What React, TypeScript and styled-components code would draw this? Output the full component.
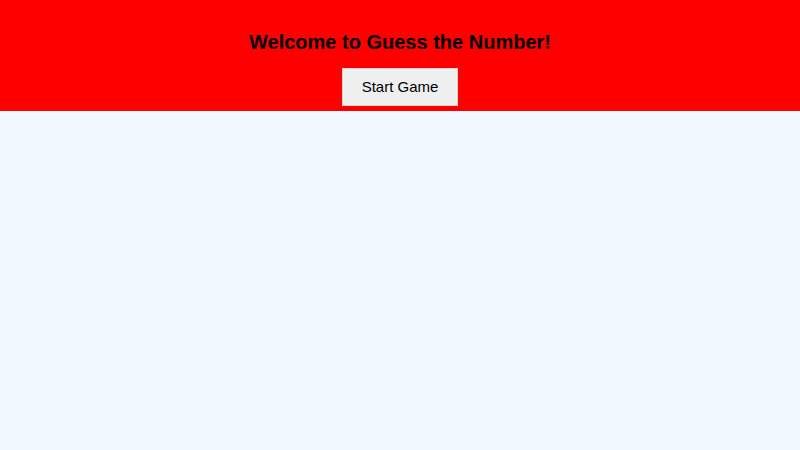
import styled, { createGlobalStyle } from 'styled-components';

const GlobalStyle = createGlobalStyle`
  html, body {
    margin: 0;
    padding: 0;
    height: 100%;
  }
  body {
    background-color: #f0f8ff;
    font-family: "Liberation Sans", Arial, sans-serif;
  }
`;

const App = () => {
  return (
    <>
      <GlobalStyle />
      <Header>
        <Title>Welcome to Guess the Number!</Title>
        <StartButton type="button">Start Game</StartButton>
      </Header>
    </>
  );
};

const Header = styled.header`
  display: flex;
  flex-direction: column;
  align-items: center;
  padding: 20px 0 5px;
  background-color: #ff0000;
`;

const Title = styled.h2`
  margin: 11px 0 14px;
  font-size: 20px;
  line-height: 23px;
  font-weight: 700;
  color: #000;
`;

const StartButton = styled.button`
  padding: 10px 19px;
  font-family: "Liberation Sans", Arial, sans-serif;
  font-size: 15px;
  line-height: 16px;
  color: #000;
  background-color: #efefef;
  border: 1px solid #d4d4d4;
  border-radius: 0;
  cursor: pointer;
`;

export default App;
